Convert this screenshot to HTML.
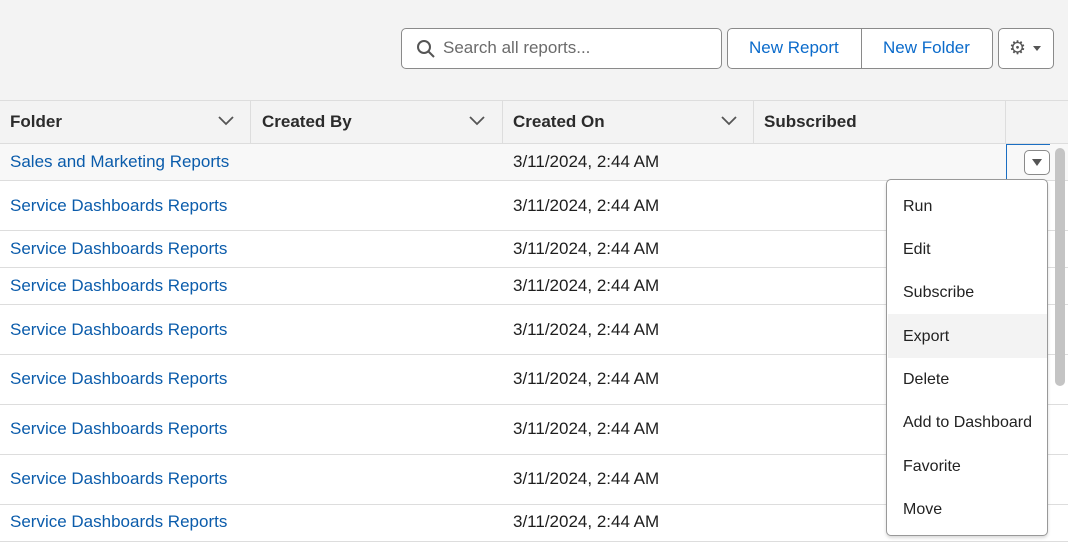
<!DOCTYPE html>
<html><head><style>
body{margin:0;width:1068px;height:548px;overflow:hidden;background:#fff;font-family:"Liberation Sans",sans-serif;position:relative}
.a{position:absolute}
.top{left:0;top:0;width:1068px;height:100px;background:#f3f3f3}
.btn{border:1px solid #8a8a8a;border-radius:5px;background:#fff;box-sizing:border-box}
.hd{left:0;top:100px;width:1068px;height:44px;background:#f3f3f3;border-top:1px solid #ddd;border-bottom:1px solid #ddd;box-sizing:border-box}
.ht{font-weight:bold;font-size:17px;color:#2b2b2b;top:112px}
.sep{top:100px;width:1px;height:43px;background:#ddd}
.chev{top:114px}
.row{left:0;width:1068px;border-bottom:1px solid #ddd;box-sizing:border-box}
.lk{left:10px;font-size:17px;color:#0b5cab}
.dt{left:513px;font-size:17px;color:#1e1e1e}
.menu{left:886px;top:179px;width:162px;height:357px;background:#fff;border:1px solid #999;border-radius:5px;box-sizing:border-box;box-shadow:0 2px 3px rgba(0,0,0,.15)}
.mi{left:16px;font-size:16px;color:#222}
</style></head><body>
<div class="a top"></div>
<div class="a btn" style="left:401px;top:28px;width:321px;height:41px"></div>
<svg class="a" style="left:416px;top:39px" width="20" height="20" viewBox="0 0 20 20"><circle cx="8" cy="8" r="6" fill="none" stroke="#555" stroke-width="2"/><line x1="12.5" y1="12.5" x2="18" y2="18" stroke="#555" stroke-width="2"/></svg>
<div class="a" style="left:443px;top:38px;font-size:17px;color:#6b6b6b">Search all reports...</div>
<div class="a btn" style="left:727px;top:28px;width:266px;height:41px"></div>
<div class="a" style="left:861px;top:29px;width:1px;height:39px;background:#8a8a8a"></div>
<div class="a" style="left:749px;top:38px;font-size:17px;color:#0b6bcb">New Report</div>
<div class="a" style="left:883px;top:38px;font-size:17px;color:#0b6bcb">New Folder</div>
<div class="a btn" style="left:998px;top:28px;width:56px;height:41px"></div>
<div class="a" style="left:1009px;top:37px;font-size:19px;color:#555">⚙</div>
<svg class="a" style="left:1033px;top:46px" width="8" height="5"><path d="M0 0L8 0L4 5Z" fill="#555"/></svg>

<div class="a hd"></div>
<div class="a ht" style="left:10px">Folder</div>
<div class="a ht" style="left:262px">Created By</div>
<div class="a ht" style="left:513px">Created On</div>
<div class="a ht" style="left:764px">Subscribed</div>
<div class="a sep" style="left:250px"></div>
<div class="a sep" style="left:502px"></div>
<div class="a sep" style="left:753px"></div>
<div class="a sep" style="left:1005px"></div>
<svg class="a chev" style="left:217px" width="18" height="14"><path d="M2 3L9 10L16 3" fill="none" stroke="#555" stroke-width="1.8"/></svg>
<svg class="a chev" style="left:468px" width="18" height="14"><path d="M2 3L9 10L16 3" fill="none" stroke="#555" stroke-width="1.8"/></svg>
<svg class="a chev" style="left:720px" width="18" height="14"><path d="M2 3L9 10L16 3" fill="none" stroke="#555" stroke-width="1.8"/></svg>

<div class="a row" style="top:144px;height:37px;background:#f8f8f8"></div>
<div class="a" style="left:1006px;top:144px;width:44px;height:36px;border-left:1px solid #1b6ec2;border-top:1px solid #1b6ec2;box-sizing:border-box"></div>
<div class="a btn" style="left:1024px;top:150px;width:26px;height:25px"></div>
<svg class="a" style="left:1032px;top:159px" width="10" height="7"><path d="M0 0L10 0L5 7Z" fill="#555"/></svg>
<div class="a row" style="top:181px;height:50px"></div>
<div class="a row" style="top:231px;height:37px"></div>
<div class="a row" style="top:268px;height:37px"></div>
<div class="a row" style="top:305px;height:50px"></div>
<div class="a row" style="top:355px;height:50px"></div>
<div class="a row" style="top:405px;height:50px"></div>
<div class="a row" style="top:455px;height:50px"></div>
<div class="a row" style="top:505px;height:37px"></div>

<div class="a lk" style="top:152px">Sales and Marketing Reports</div><div class="a dt" style="top:152px">3/11/2024, 2:44 AM</div>
<div class="a lk" style="top:196px">Service Dashboards Reports</div><div class="a dt" style="top:196px">3/11/2024, 2:44 AM</div>
<div class="a lk" style="top:239px">Service Dashboards Reports</div><div class="a dt" style="top:239px">3/11/2024, 2:44 AM</div>
<div class="a lk" style="top:276px">Service Dashboards Reports</div><div class="a dt" style="top:276px">3/11/2024, 2:44 AM</div>
<div class="a lk" style="top:320px">Service Dashboards Reports</div><div class="a dt" style="top:320px">3/11/2024, 2:44 AM</div>
<div class="a lk" style="top:369px">Service Dashboards Reports</div><div class="a dt" style="top:369px">3/11/2024, 2:44 AM</div>
<div class="a lk" style="top:419px">Service Dashboards Reports</div><div class="a dt" style="top:419px">3/11/2024, 2:44 AM</div>
<div class="a lk" style="top:469px">Service Dashboards Reports</div><div class="a dt" style="top:469px">3/11/2024, 2:44 AM</div>
<div class="a lk" style="top:512px">Service Dashboards Reports</div><div class="a dt" style="top:512px">3/11/2024, 2:44 AM</div>

<div class="a" style="left:1055px;top:148px;width:10px;height:238px;border-radius:5px;background:#c4c4c4"></div>

<div class="a menu">
<div class="a" style="left:1px;top:134px;width:159px;height:44px;background:#f3f3f3"></div>
<div class="a mi" style="top:18px">Run</div>
<div class="a mi" style="top:61px">Edit</div>
<div class="a mi" style="top:104px">Subscribe</div>
<div class="a mi" style="top:148px">Export</div>
<div class="a mi" style="top:191px">Delete</div>
<div class="a mi" style="top:234px">Add to Dashboard</div>
<div class="a mi" style="top:278px">Favorite</div>
<div class="a mi" style="top:321px">Move</div>
</div>
</body></html>
